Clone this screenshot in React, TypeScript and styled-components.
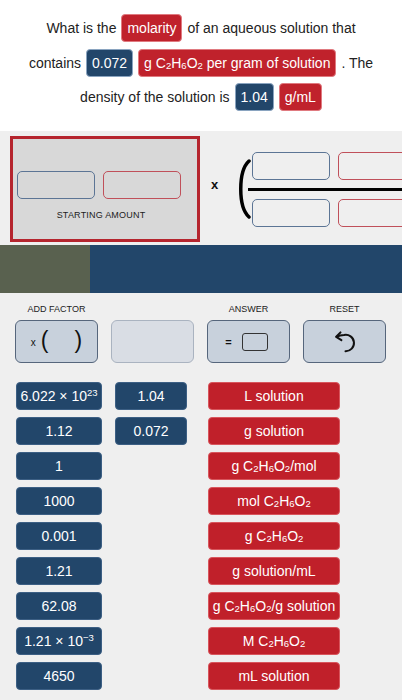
import React from "react";
import styled, { createGlobalStyle } from "styled-components";

const GlobalStyle = createGlobalStyle`
  * { box-sizing: border-box; }
  body {
    margin: 0;
    background: #efefef;
    font-family: "Liberation Sans", Arial, sans-serif;
  }
`;

const Page = styled.div`
  width: 402px;
  height: 700px;
  overflow: hidden;
  background: #efefef;
`;

const Question = styled.div`
  background: #ffffff;
  padding-top: 11px;
  height: 131px;
  font-size: 14px;
  color: #222;
`;

const QLine = styled.div`
  height: 34.5px;
  display: flex;
  align-items: center;
  justify-content: center;
  gap: 5px;
  white-space: nowrap;
`;

const Pill = styled.span<{ $tone: "red" | "blue" }>`
  display: inline-block;
  height: 28px;
  line-height: 26px;
  padding: 0 5px;
  border-radius: 4px;
  color: #fff;
  background: ${(p) => (p.$tone === "red" ? "#c0222c" : "#22466a")};
  border: 1px solid ${(p) => (p.$tone === "red" ? "#e07a80" : "#8aa4c0")};
`;

const Sub = styled.sub`
  font-size: 0.68em;
  vertical-align: -0.12em;
  line-height: 0;
`;

const Sup = styled.sup`
  font-size: 0.68em;
  vertical-align: 0.55em;
  line-height: 0;
`;

const Workspace = styled.div`
  height: 114px;
  display: flex;
  align-items: center;
  padding-left: 10px;
  padding-top: 2px;
  overflow: hidden;
`;

const StartBox = styled.div`
  width: 190px;
  height: 106px;
  flex: none;
  border: 3px solid #b5252e;
  background: #d8d8d8;
  padding: 32px 0 0 4px;
  display: flex;
  flex-direction: column;
`;

const SlotRow = styled.div`
  display: flex;
  gap: 8px;
`;

const Slot = styled.div<{ $tone: "red" | "blue" }>`
  width: 78px;
  height: 28px;
  flex: none;
  border-radius: 5px;
  border: 1px solid ${(p) => (p.$tone === "red" ? "#c0505a" : "#5c7595")};
`;

const StartLabel = styled.div`
  margin-top: 11px;
  width: 168px;
  text-align: center;
  font-size: 9px;
  color: #222;
  letter-spacing: 0.2px;
`;

const Times = styled.div`
  margin: 0 0 10px 11px;
  font-size: 13px;
  font-weight: bold;
  color: #111;
  width: 14px;
  flex: none;
`;

const Paren = styled.svg`
  flex: none;
  margin-left: 10px;
  margin-right: -4px;
`;

const Fraction = styled.div`
  display: flex;
  flex-direction: column;
  flex: none;
`;

const FracRow = styled.div`
  display: flex;
  gap: 8px;
  padding-left: 5px;
`;

const FracLine = styled.div`
  height: 3px;
  width: 170px;
  margin-left: 1px;
  background: #000;
  margin-top: 8px;
  margin-bottom: 8px;
`;

const Band = styled.div`
  height: 48px;
  display: flex;
`;

const BandOlive = styled.div`
  width: 90px;
  background: #59614f;
`;

const BandNavy = styled.div`
  flex: 1;
  background: #22466a;
`;

const Controls = styled.div`
  display: flex;
  gap: 13px;
  padding: 11px 0 0 15px;
`;

const ControlCol = styled.div`
  width: 83px;
  display: flex;
  flex-direction: column;
  align-items: center;
`;

const ControlLabel = styled.div`
  height: 12px;
  margin-bottom: 4px;
  font-size: 9px;
  color: #222;
`;

const ControlButton = styled.div<{ $disabled?: boolean }>`
  width: 83px;
  height: 43px;
  border-radius: 6px;
  display: flex;
  align-items: center;
  justify-content: center;
  background: ${(p) => (p.$disabled ? "#d9dde4" : "#c8d1dc")};
  border: 1px solid ${(p) => (p.$disabled ? "#aab3c0" : "#56667c")};
  color: #111;
`;

const SmallX = styled.span`
  font-size: 10px;
  margin-right: 5px;
  margin-top: 2px;
`;

const BigParen = styled.span`
  font-size: 23px;
  line-height: 1;
  margin-top: -2px;
`;

const ParenGap = styled.span`
  width: 26px;
`;

const Equals = styled.span`
  font-size: 11px;
  font-weight: bold;
  margin-right: 10px;
  margin-left: -4px;
`;

const AnswerSlot = styled.span`
  width: 26px;
  height: 18px;
  border: 1.5px solid #333;
  border-radius: 3px;
`;

const Tiles = styled.div`
  display: flex;
  padding: 19px 0 0 16px;
`;

const TileCol = styled.div<{ $w: number; $ml: number }>`
  display: flex;
  flex-direction: column;
  gap: 7px;
  width: ${(p) => p.$w}px;
  margin-left: ${(p) => p.$ml}px;
`;

const Tile = styled.div<{ $tone: "red" | "blue" }>`
  height: 28px;
  line-height: 26px;
  border-radius: 4px;
  text-align: center;
  font-size: 14px;
  color: #fff;
  white-space: nowrap;
  background: ${(p) => (p.$tone === "red" ? "#c0202a" : "#22466a")};
  border: 1px solid ${(p) => (p.$tone === "red" ? "#d8555c" : "#3c5f84")};
`;

const Glycol = () => (
  <>
    C<Sub>2</Sub>H<Sub>6</Sub>O<Sub>2</Sub>
  </>
);

const numbers: React.ReactNode[] = [
  <>6.022 × 10<Sup>23</Sup></>,
  "1.12",
  "1",
  "1000",
  "0.001",
  "1.21",
  "62.08",
  <>1.21 × 10<Sup>−3</Sup></>,
  "4650",
];

const givens = ["1.04", "0.072"];

const units: React.ReactNode[] = [
  "L solution",
  "g solution",
  <>g <Glycol />/mol</>,
  <>mol <Glycol /></>,
  <>g <Glycol /></>,
  "g solution/mL",
  <>g <Glycol />/g solution</>,
  <>M <Glycol /></>,
  "mL solution",
];

const ResetIcon = () => (
  <svg width="24" height="24" viewBox="0 0 24 24" fill="none" stroke="#111" strokeWidth="2" strokeLinecap="round" strokeLinejoin="round">
    <path d="M3.5 6.8 Q7 5 11 5 A8.2 8.2 0 1 1 12.5 21.2" />
    <path d="M7.5 2.4 L3.2 6.8 L8.4 10.2" />
  </svg>
);

export default function App() {
  return (
    <Page>
      <GlobalStyle />
      <Question>
        <QLine>
          What is the <Pill $tone="red">molarity</Pill> of an aqueous solution that
        </QLine>
        <QLine>
          contains <Pill $tone="blue">0.072</Pill>
          <Pill $tone="red">
            g <Glycol /> per gram of solution
          </Pill>
          . The
        </QLine>
        <QLine>
          density of the solution is <Pill $tone="blue">1.04</Pill>
          <Pill $tone="red">g/mL</Pill>
        </QLine>
      </Question>

      <Workspace>
        <StartBox>
          <SlotRow>
            <Slot $tone="blue" />
            <Slot $tone="red" />
          </SlotRow>
          <StartLabel>STARTING AMOUNT</StartLabel>
        </StartBox>
        <Times>x</Times>
        <Paren width="16" height="60" viewBox="0 0 16 60">
          <path d="M14 2 C3 12 3 48 14 58" stroke="#000" strokeWidth="3.5" fill="none" strokeLinecap="round" />
        </Paren>
        <Fraction>
          <FracRow>
            <Slot $tone="blue" />
            <Slot $tone="red" />
          </FracRow>
          <FracLine />
          <FracRow>
            <Slot $tone="blue" />
            <Slot $tone="red" />
          </FracRow>
        </Fraction>
      </Workspace>

      <Band>
        <BandOlive />
        <BandNavy />
      </Band>

      <Controls>
        <ControlCol>
          <ControlLabel>ADD FACTOR</ControlLabel>
          <ControlButton>
            <SmallX>x</SmallX>
            <BigParen>(</BigParen>
            <ParenGap />
            <BigParen>)</BigParen>
          </ControlButton>
        </ControlCol>
        <ControlCol>
          <ControlLabel />
          <ControlButton $disabled />
        </ControlCol>
        <ControlCol>
          <ControlLabel>ANSWER</ControlLabel>
          <ControlButton>
            <Equals>=</Equals>
            <AnswerSlot />
          </ControlButton>
        </ControlCol>
        <ControlCol>
          <ControlLabel>RESET</ControlLabel>
          <ControlButton>
            <ResetIcon />
          </ControlButton>
        </ControlCol>
      </Controls>

      <Tiles>
        <TileCol $w={86} $ml={0}>
          {numbers.map((n, i) => (
            <Tile key={i} $tone="blue">{n}</Tile>
          ))}
        </TileCol>
        <TileCol $w={72} $ml={13}>
          {givens.map((g) => (
            <Tile key={g} $tone="blue">{g}</Tile>
          ))}
        </TileCol>
        <TileCol $w={132} $ml={21}>
          {units.map((u, i) => (
            <Tile key={i} $tone="red">{u}</Tile>
          ))}
        </TileCol>
      </Tiles>
    </Page>
  );
}
